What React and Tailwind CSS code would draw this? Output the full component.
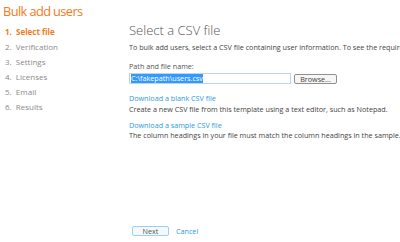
export default function App() {
  const steps = ['Verification', 'Settings', 'Licenses', 'Email', 'Results'];
  return (
    <div className="w-[400px] h-[242px] bg-white overflow-hidden flex flex-col font-['Open_Sans',sans-serif]">
      <h1 className="h-[22px] pl-[3px] pt-[1px] text-[12.8px] leading-[20px] text-[#f37a22] tracking-[-0.6px]">
        Bulk add users
      </h1>
      <div className="flex flex-1 min-h-0">
        <ul className="w-[129px] shrink-0 pt-[2px] pl-[5px] text-[8px] leading-[15px]">
          <li className="font-bold text-[#f37a22]">1.&nbsp; Select file</li>
          {steps.map((s, i) => (
            <li key={s} className="text-[#8a8a8a]">{i + 2}.&nbsp; {s}</li>
          ))}
        </ul>
        <div className="flex-1 flex flex-col min-w-0 whitespace-nowrap overflow-hidden text-[7.2px] leading-[10px]">
          <h2 className="text-[13px] leading-[16px] font-light text-[#555]">Select a CSV file</h2>
          <p className="mt-[4px] text-[#444]">
            To bulk add users, select a CSV file containing user information. To see the required format, download a sample file.
          </p>
          <label className="mt-[9px] text-[#555]">Path and file name:</label>
          <div className="mt-[2px] flex items-center gap-[3px]">
            <div className="w-[162px] h-[11px] border border-[#b9d7ef] flex items-center px-[1px]">
              <span className="bg-[#3399ff] text-white leading-[9px]">C:\fakepath\users.csv</span>
            </div>
            <button className="w-[43px] h-[10px] border border-[#8f8f8f] rounded-[2px] bg-[#f6f6f6] leading-[8px] text-[#444]">
              Browse...
            </button>
          </div>
          <a className="mt-[9px] text-[#2b9be0]">Download a blank CSV file</a>
          <p className="mt-[1px] text-[#444]">
            Create a new CSV file from this template using a text editor, such as Notepad.
          </p>
          <a className="mt-[6px] text-[#2b9be0]">Download a sample CSV file</a>
          <p className="text-[#444]">
            The column headings in your file must match the column headings in the sample.
          </p>
          <div className="mt-auto mb-[6px] flex items-center gap-[7px] pl-[3px]">
            <button className="w-[37px] h-[10px] border border-[#9ccff2] rounded-[2px] bg-[#f3f9fe] leading-[8px] text-[#555]">
              Next
            </button>
            <a className="text-[#2b9be0]">Cancel</a>
          </div>
        </div>
      </div>
    </div>
  );
}
